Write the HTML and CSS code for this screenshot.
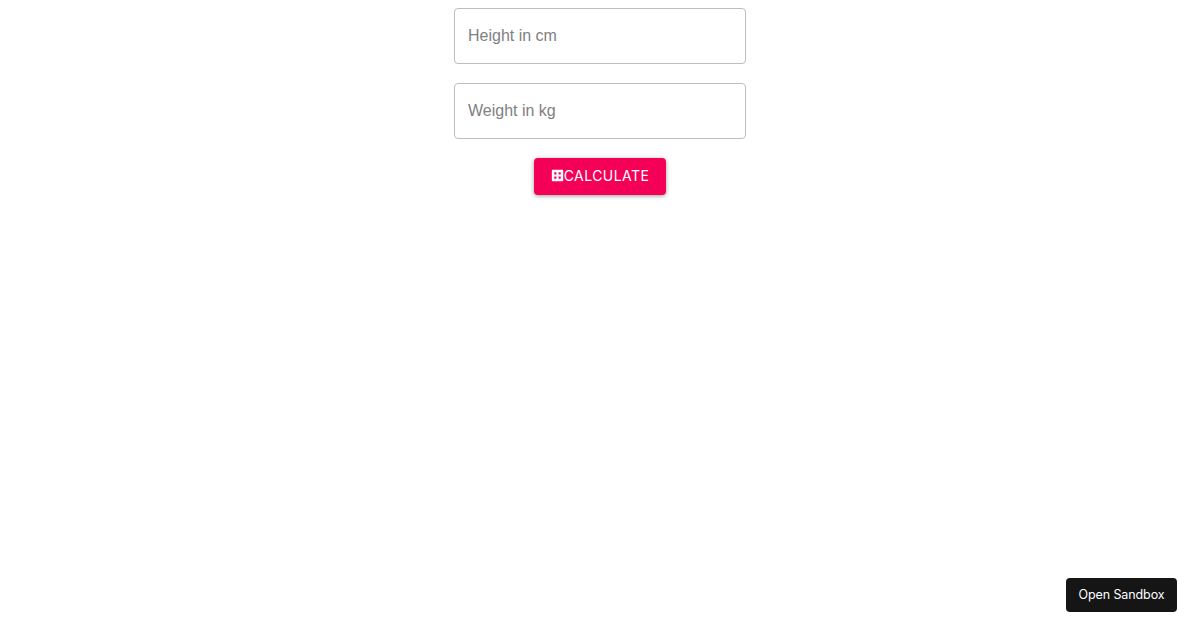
FILE: index.html
```html
<!DOCTYPE html>
<html lang="en">
<head>
    <meta charset="UTF-8">
    <meta name="viewport" content="width=device-width, initial-scale=1.0">
    <title>BMI Calculator</title>
    <link rel="stylesheet" href="styles.css">
</head>
<body>
    <form class="bmi-form">
        <input type="text" class="text-input" placeholder="Height in cm">
        <input type="text" class="text-input" placeholder="Weight in kg">
        <button type="button" class="calculate-button">
            <svg class="calculate-icon" viewBox="0 0 24 24" width="13" height="13">
                <path fill="currentColor" fill-rule="evenodd" d="M3 1.5h18A1.5 1.5 0 0 1 22.500 3v18a1.500 1.500 0 0 1-1.500 1.500H3A1.500 1.500 0 0 1 1.500 21V3A1.500 1.500 0 0 1 3 1.500zM6 6v4h4V6H6zm8 0v4h4V6h-4zM6 14v4h4v-4H6zm8 0v4h4v-4h-4z"/>
            </svg>
            Calculate
        </button>
    </form>
    <a class="sandbox-link" href="#">Open Sandbox</a>
</body>
</html>
```

FILE: styles.css
```css
* {
    margin: 0;
    padding: 0;
    box-sizing: border-box;
}

html, body {
    height: 100%;
}

body {
    background-color: #fff;
    font-family: 'Liberation Sans', Arial, sans-serif;
    overflow: hidden;
}

.bmi-form {
    display: flex;
    flex-direction: column;
    align-items: center;
    padding-top: 8px;
}

.text-input {
    width: 292px;
    height: 56px;
    margin-bottom: 19px;
    padding: 0 13px;
    border: 1px solid #bdbdbd;
    border-radius: 4px;
    background-color: #fff;
    font-family: inherit;
    font-size: 16px;
    color: #333;
    outline: none;
}

.text-input::placeholder {
    color: #808080;
    opacity: 1;
}

.calculate-button {
    display: flex;
    align-items: center;
    justify-content: center;
    width: 132px;
    height: 37px;
    padding-bottom: 2px;
    border: none;
    border-radius: 4px;
    background-color: #f50057;
    color: #fff;
    font-family: Inter, 'Liberation Sans', sans-serif;
    font-size: 14px;
    font-weight: 400;
    letter-spacing: 0.45px;
    text-transform: uppercase;
    box-shadow: 0 1px 4px rgba(0, 0, 0, 0.4);
    cursor: pointer;
}

.calculate-icon {
    flex-shrink: 0;
}

.sandbox-link {
    position: absolute;
    right: 23px;
    bottom: 18px;
    width: 111px;
    height: 34px;
    padding-bottom: 1px;
    display: flex;
    align-items: center;
    justify-content: center;
    border-radius: 4px;
    background-color: #151515;
    color: #fff;
    font-family: Inter, 'Liberation Sans', sans-serif;
    font-size: 12.5px;
    letter-spacing: -0.1px;
    text-decoration: none;
}
```
